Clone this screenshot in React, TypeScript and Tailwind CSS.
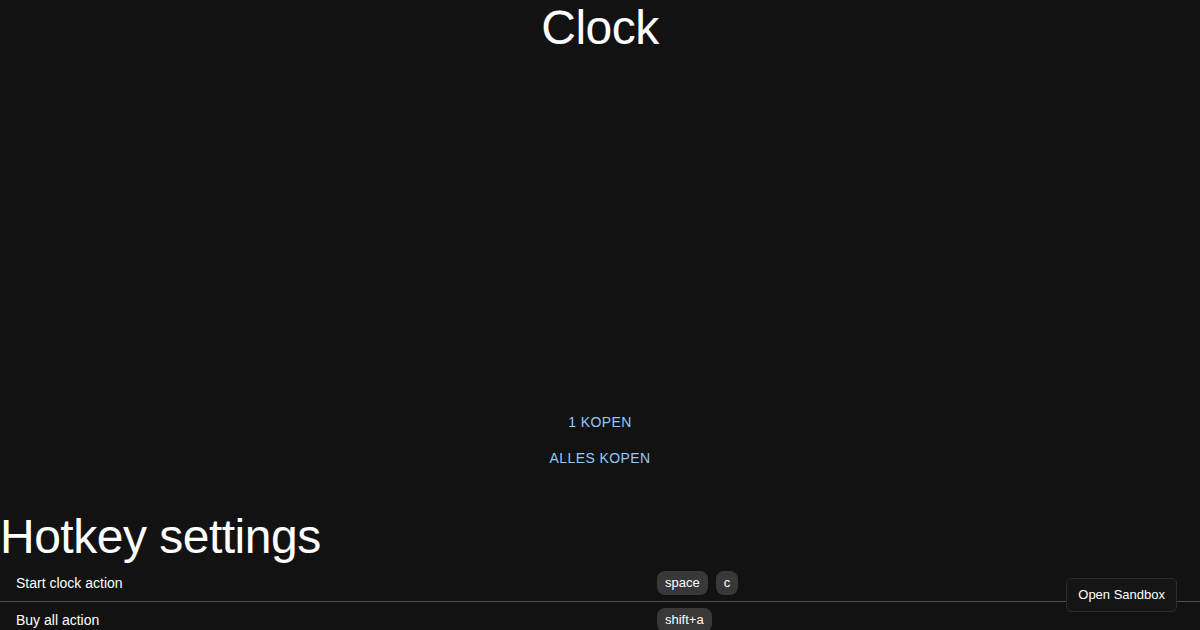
import React from "react";

const hotkeys = [
  { action: "Start clock action", keys: ["space", "c"] },
  { action: "Buy all action", keys: ["shift+a"] },
];

export default function App() {
  return (
    <div className="min-h-screen bg-[#121212] text-white font-['Liberation_Sans',Arial,sans-serif]">
      <h1 className="text-center text-[48px] leading-[normal] tracking-[-0.5px]">Clock</h1>

      {/* empty clock face area */}
      <div className="h-[349px]" />

      <div className="flex flex-col items-center">
        <button className="h-9 px-2 text-sm uppercase tracking-[0.02857em] text-[#90caf9]">1 kopen</button>
        <button className="h-9 px-2 text-sm uppercase tracking-[0.02857em] text-[#90caf9]">Alles kopen</button>
      </div>

      <h1 className="mt-[33px] text-[48px] leading-[normal] tracking-[-0.5px]">Hotkey settings</h1>

      <div className="mt-px flex flex-col">
        {hotkeys.map((row) => (
          <div
            key={row.action}
            className="grid grid-cols-[641px_1fr] items-center border-b border-[#515151] text-sm"
          >
            <div className="px-4 py-[6px]">{row.action}</div>
            <div className="flex gap-2 px-4 py-[6px]">
              {row.keys.map((k) => (
                <span
                  key={k}
                  className="flex h-6 items-center rounded-lg bg-[#383838] px-2 text-[13px]"
                >
                  {k}
                </span>
              ))}
            </div>
          </div>
        ))}
      </div>

      <button className="fixed bottom-[18px] right-[23px] h-[34px] rounded-[5px] border border-[#2c2c2c] bg-[#151515] px-[11px] text-[13px] text-white">
        Open Sandbox
      </button>
    </div>
  );
}
